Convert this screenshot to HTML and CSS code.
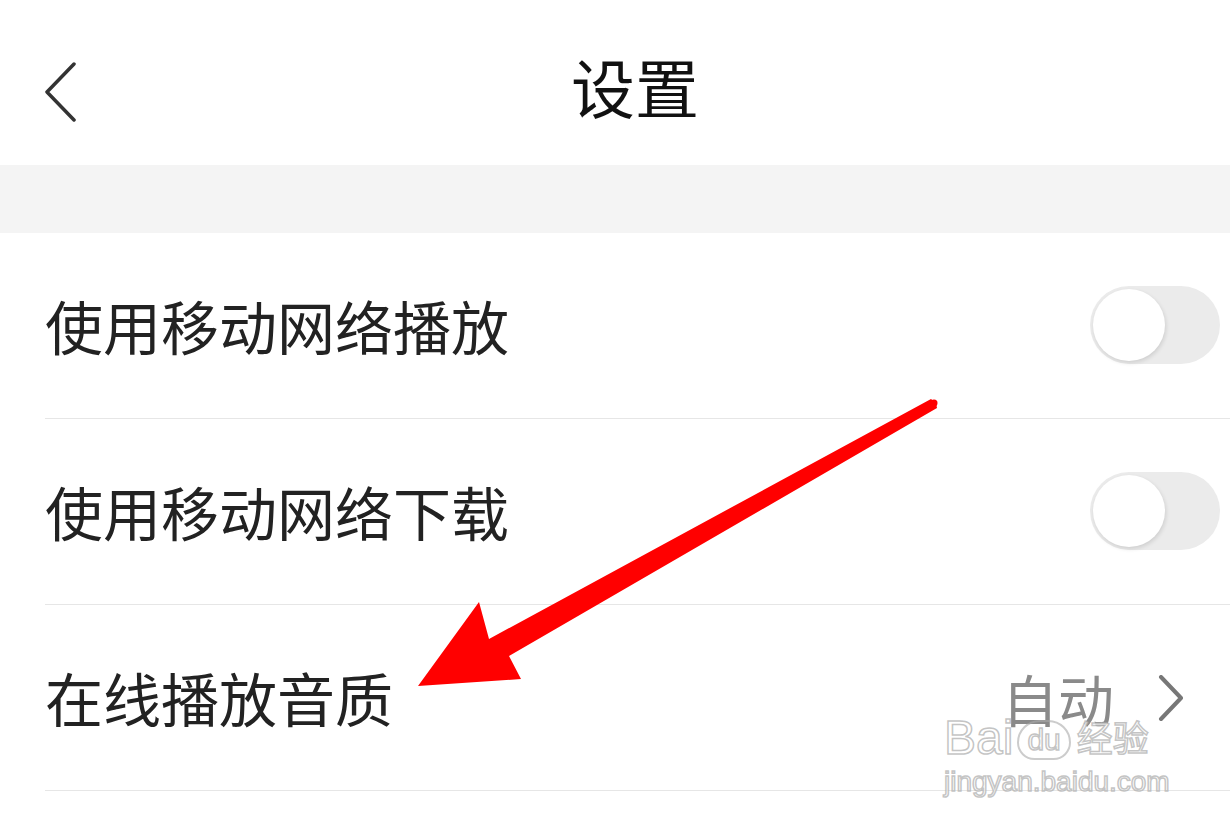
FILE: index.html
```html
<!DOCTYPE html>
<html lang="zh-CN">
<head>
    <meta charset="UTF-8">
    <meta name="viewport" content="width=device-width, initial-scale=1.0">
    <title>设置</title>
    <link rel="stylesheet" href="styles.css">
</head>
<body>
    <div class="page">
        <header class="nav-bar">
            <svg class="back-icon" width="34" height="60" viewBox="0 0 34 60">
                <path d="M31 2 L4 30 L31 58" fill="none" stroke="#333" stroke-width="3.5" stroke-linecap="round" stroke-linejoin="round"/>
            </svg>
            <h1 class="nav-title">设置</h1>
        </header>

        <div class="section-gap"></div>

        <ul class="setting-list">
            <li class="setting-item">
                <span class="setting-label">使用移动网络播放</span>
                <span class="switch"><span class="switch-knob"></span></span>
            </li>
            <li class="setting-item">
                <span class="setting-label">使用移动网络下载</span>
                <span class="switch"><span class="switch-knob"></span></span>
            </li>
            <li class="setting-item link">
                <span class="setting-label">在线播放音质</span>
                <span class="setting-value">
                    自动
                    <svg class="chevron" width="26" height="46" viewBox="0 0 26 46">
                        <path d="M3 2 L23 23 L3 44" fill="none" stroke="#777" stroke-width="4" stroke-linecap="round" stroke-linejoin="round"/>
                    </svg>
                </span>
            </li>
        </ul>

        <!-- annotation arrow drawn over the screenshot -->
        <svg class="annotation" width="1230" height="818" viewBox="0 0 1230 818">
            <polygon points="418,686 479,602 489,639 931,399 936,403 937,408 509,656 521,679" fill="#ff0000"/>
            <circle cx="934" cy="403" r="3.5" fill="#ff0000"/>
        </svg>

        <div class="watermark">
            <div class="wm-logo">Bai<span class="wm-paw">du</span><span class="wm-cn">经验</span></div>
            <div class="wm-url">jingyan.baidu.com</div>
        </div>
    </div>
</body>
</html>
```

FILE: styles.css
```css
* {
    margin: 0;
    padding: 0;
    box-sizing: border-box;
}

body {
    font-family: "Noto Sans CJK SC", "Noto Sans", sans-serif;
    background: #fff;
    color: #222;
}

.page {
    position: relative;
    width: 1230px;
    height: 818px;
    overflow: hidden;
}

.nav-bar {
    position: relative;
    height: 165px;
    display: flex;
    align-items: center;
    justify-content: center;
}

.back-icon {
    position: absolute;
    left: 43px;
    top: 62px;
}

.nav-title {
    font-size: 64px;
    font-weight: 400;
    color: #111;
    line-height: 1;
    margin: 4px 0 0 40px;
}

.section-gap {
    height: 68px;
    background: #f4f4f4;
}

.setting-list {
    list-style: none;
    padding-left: 45px;
}

.setting-item {
    height: 186px;
    display: flex;
    align-items: center;
    justify-content: space-between;
    padding-right: 10px;
    border-bottom: 1px solid #e6e6e6;
}

.setting-item.link {
    padding-right: 46px;
}

.setting-label {
    font-size: 58px;
    line-height: 1;
    color: #222;
    margin-top: -2px;
}

.switch {
    width: 130px;
    height: 78px;
    border-radius: 39px;
    background: #ebebeb;
    display: flex;
    align-items: center;
    padding-left: 3px;
    margin-top: -2px;
}

.switch-knob {
    width: 72px;
    height: 72px;
    border-radius: 50%;
    background: #fff;
    box-shadow: 1px 2px 4px rgba(0, 0, 0, 0.12);
}

.setting-value {
    display: flex;
    align-items: center;
    gap: 44px;
    font-size: 56px;
    line-height: 1;
    color: #8a8a8a;
}

.annotation {
    position: absolute;
    left: 0;
    top: 0;
    pointer-events: none;
}

.watermark {
    position: absolute;
    left: 944px;
    top: 712px;
    color: rgba(255, 255, 255, 0.75);
    -webkit-text-stroke: 1.5px rgba(170, 170, 170, 0.7);
    font-family: "Liberation Sans", Arial, "Noto Sans CJK SC", sans-serif;
    pointer-events: none;
}

.wm-logo {
    font-size: 48px;
    line-height: 48px;
    display: flex;
    align-items: center;
}

.wm-paw {
    font-size: 30px;
    margin: 4px 6px 0 4px;
    padding: 0 8px;
    border: 2px solid rgba(170, 170, 170, 0.6);
    border-radius: 26px 26px 20px 20px;
    line-height: 36px;
}

.wm-cn {
    font-size: 36px;
    margin-top: 4px;
}

.wm-url {
    font-size: 28px;
    line-height: 32px;
    margin-top: 2px;
}
```
